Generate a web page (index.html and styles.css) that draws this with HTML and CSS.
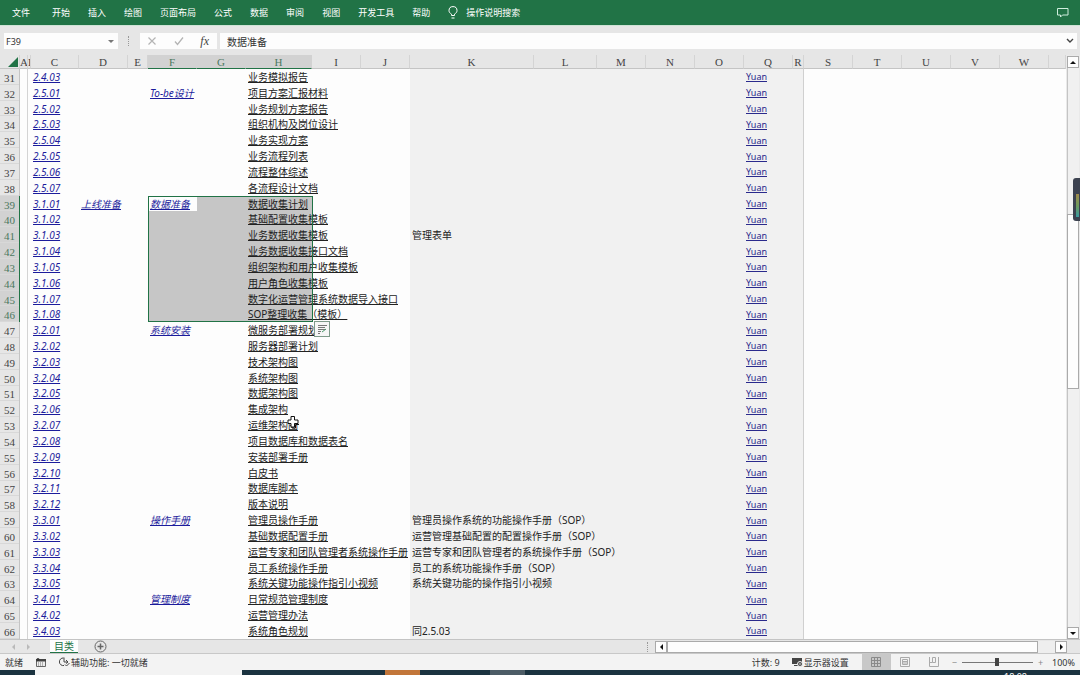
FILE: index.html
```html
<!DOCTYPE html>
<html lang="zh-CN">

<head>
    <meta charset="UTF-8">
    <meta name="viewport" content="width=device-width, initial-scale=1.0">
    <title>目类</title>
    <link rel="stylesheet" href="styles.css">
</head>

<body>
    <nav class="ribbon">
        <button class="file-tab">文件</button>
        <button>开始</button>
        <button>插入</button>
        <button>绘图</button>
        <button>页面布局</button>
        <button>公式</button>
        <button>数据</button>
        <button>审阅</button>
        <button>视图</button>
        <button>开发工具</button>
        <button>帮助</button>
        <button class="tell-me">
            <svg width="10" height="13" viewBox="0 0 10 13" fill="none" stroke="#fff">
                <path d="M3.5 9.5V8.2C2.2 7.2 1 6.3 1 4.6a4 4 0 0 1 8 0c0 1.700-1.200 2.600-2.500 3.600v1.300zM3.500 12h3" />
            </svg>
            操作说明搜索
        </button>
        <button class="comments" aria-label="批注">
            <svg width="12" height="10" viewBox="0 0 12 10" fill="none" stroke="#cfeedd">
                <path d="M.5.5h10.500v6.500H5.500l-2 2V7h-3z" />
            </svg>
        </button>
    </nav>

    <div class="formula-bar">
        <div class="name-box">
            <input type="text" value="F39" aria-label="名称框">
            <span class="caret"></span>
        </div>
        <span class="grip"></span>
        <div class="formula-tools">
            <button aria-label="取消">
                <svg width="10" height="10" viewBox="0 0 10 10" stroke="#b4b4b4" stroke-width="1.200">
                    <path d="M1.500 1.500l7 7M8.500 1.500l-7 7" />
                </svg>
            </button>
            <button aria-label="输入">
                <svg width="10" height="10" viewBox="0 0 10 10" fill="none" stroke="#b4b4b4" stroke-width="1.300">
                    <path d="M1 5.500l2.500 3L9 1.500" />
                </svg>
            </button>
            <button class="fx">fx</button>
        </div>
        <div class="formula-input">
            <input type="text" value="数据准备" aria-label="编辑栏">
            <svg width="8" height="6" viewBox="0 0 8 6" fill="none" stroke="#444" stroke-width="1.400">
                <path d="M1 1l3 3 3-3" />
            </svg>
        </div>
    </div>

    <main class="sheet">
        <div class="cells">
            <table>
                <colgroup>
                    <col class="w-row">
                    <col class="w-a">
                    <col class="w-b">
                    <col class="w-c">
                    <col class="w-std">
                    <col class="w-e">
                    <col class="w-std">
                    <col class="w-std">
                    <col class="w-h">
                    <col class="w-std">
                    <col class="w-std">
                    <col class="w-k shaded">
                    <col class="w-l shaded">
                    <col class="w-std shaded">
                    <col class="w-std shaded">
                    <col class="w-std shaded">
                    <col class="w-std shaded">
                    <col class="w-r shaded">
                    <col class="w-std">
                    <col class="w-std">
                    <col class="w-std">
                    <col class="w-std">
                    <col class="w-std">
                    <col>
                </colgroup>
                <thead>
                    <tr id="column-heads"></tr>
                </thead>
                <tbody id="rows"></tbody>
            </table>
            <svg class="pointer" width="12" height="14" viewBox="0 0 12 14" fill="#fff" stroke="#111">
                <path d="M4 1.500h3.500v3.500H11v3.500H7.500V12H4V8.500H1V5h3z" />
                <path d="M5 13h3.500V9.500H12" fill="none" />
            </svg>
        </div>
        <div class="vscroll">
            <button aria-label="向上"><span class="arrow up"></span></button>
            <div class="vtrack">
                <div class="vthumb"></div>
            </div>
            <button aria-label="向下"><span class="arrow down"></span></button>
            <div class="side-widget"><span></span></div>
        </div>
    </main>

    <div class="tab-bar">
        <span class="tab-nav"><i class="arrow left"></i><i class="arrow right"></i></span>
        <button class="sheet-tab">目类</button>
        <button class="add-sheet" aria-label="新工作表">
            <svg width="13" height="13" viewBox="0 0 13 13" fill="none" stroke="#666">
                <circle cx="6.500" cy="6.500" r="5.500" />
                <path d="M6.500 3.500v6M3.500 6.500h6" stroke-width="1.500" />
            </svg>
        </button>
        <span class="grip"></span>
        <div class="hscroll">
            <button aria-label="向左"><span class="arrow left"></span></button>
            <div class="hthumb"></div>
            <button aria-label="向右"><span class="arrow right"></span></button>
        </div>
    </div>

    <footer class="status-bar">
        <span class="ready">就绪</span>
        <svg class="macro" width="10" height="9" viewBox="0 0 10 9">
            <path d="M.5 2.500h9v6h-9z" fill="#eee" stroke="#666" />
            <path d="M0 1h10v2.500H0z" fill="#444" />
            <path d="M2 5h6M2 7h6" stroke="#777" stroke-dasharray="1 1" />
            <circle cx="2" cy="1.500" r="1.500" fill="#333" />
        </svg>
        <button class="access">
            <svg width="11" height="10" viewBox="0 0 11 10" fill="none" stroke="#444">
                <path d="M4.500 1A3.800 3.800 0 1 0 5 8.500M5 .5V5h3.500M7 3l2 2-2 1.500M6 7.500l1.500 1.500L10.500 6" />
            </svg>
            辅助功能: 一切就绪
        </button>
        <span class="count">计数: 9</span>
        <button class="display">
            <svg width="11" height="10" viewBox="0 0 11 10">
                <path d="M0 1h10v6H0zM2 8h4v1H2z" fill="#444" />
                <circle cx="8" cy="7" r="2.500" fill="#444" stroke="#f3f3f3" />
                <circle cx="8" cy="7" r=".8" fill="#f3f3f3" />
            </svg>
            显示器设置
        </button>
        <div class="views">
            <button class="active" aria-label="普通">
                <svg width="10" height="10" viewBox="0 0 10 10" fill="none" stroke="#8a8a8a">
                    <path d="M.5.5h9v9h-9zM3.500.5v9M6.500.5v9M.5 3.500h9M.5 6.500h9" />
                </svg>
            </button>
            <button aria-label="页面布局">
                <svg width="10" height="10" viewBox="0 0 10 10" fill="none" stroke="#aaa">
                    <path d="M.5.5h9v9h-9zM2.500 2.500h5v5h-5zM3 4.500h4M3 6h4" />
                </svg>
            </button>
            <button aria-label="分页预览">
                <svg width="10" height="10" viewBox="0 0 10 10" fill="none" stroke="#aaa">
                    <path d="M.5 0v9.500h9V0M3.500.5v5h3v-5M.5 5.500h3M3.500.5h3" />
                </svg>
            </button>
        </div>
        <div class="zoom">
            <button aria-label="缩小">−</button>
            <input type="range" min="0" max="100" value="50" aria-label="缩放">
            <button aria-label="放大">+</button>
            <span>100%</span>
        </div>
    </footer>

    <div class="taskbar">
        <span class="task-search"></span>
        <span class="task-app orange"></span>
        <span class="task-app gray"></span>
        <time>18:08</time>
    </div>

    <script>
        const COLUMNS = ['A', 'B', 'C', 'D', 'E', 'F', 'G', 'H', 'I', 'J', 'K', 'L', 'M', 'N', 'O', 'Q', 'R', 'S', 'T', 'U', 'V', 'W', ''];
        const FIRST_ROW = 31;

        // code, document, and the optional D, F and K columns
        const DATA = [
            { c: '2.4.03', h: '业务模拟报告' },
            { c: '2.5.01', h: '项目方案汇报材料', f: 'To-be设计' },
            { c: '2.5.02', h: '业务规划方案报告' },
            { c: '2.5.03', h: '组织机构及岗位设计' },
            { c: '2.5.04', h: '业务实现方案' },
            { c: '2.5.05', h: '业务流程列表' },
            { c: '2.5.06', h: '流程整体综述' },
            { c: '2.5.07', h: '各流程设计文档' },
            { c: '3.1.01', h: '数据收集计划', d: '上线准备', f: '数据准备' },
            { c: '3.1.02', h: '基础配置收集模板' },
            { c: '3.1.03', h: '业务数据收集模板', k: '管理表单' },
            { c: '3.1.04', h: '业务数据收集接口文档' },
            { c: '3.1.05', h: '组织架构和用户收集模板' },
            { c: '3.1.06', h: '用户角色收集模板' },
            { c: '3.1.07', h: '数字化运营管理系统数据导入接口' },
            { c: '3.1.08', h: 'SOP整理收集（模板）' },
            { c: '3.2.01', h: '微服务部署规划', f: '系统安装' },
            { c: '3.2.02', h: '服务器部署计划' },
            { c: '3.2.03', h: '技术架构图' },
            { c: '3.2.04', h: '系统架构图' },
            { c: '3.2.05', h: '数据架构图' },
            { c: '3.2.06', h: '集成架构' },
            { c: '3.2.07', h: '运维架构图' },
            { c: '3.2.08', h: '项目数据库和数据表名' },
            { c: '3.2.09', h: '安装部署手册' },
            { c: '3.2.10', h: '白皮书' },
            { c: '3.2.11', h: '数据库脚本' },
            { c: '3.2.12', h: '版本说明' },
            { c: '3.3.01', h: '管理员操作手册', f: '操作手册', k: '管理员操作系统的功能操作手册（SOP）' },
            { c: '3.3.02', h: '基础数据配置手册', k: '运营管理基础配置的配置操作手册（SOP）' },
            { c: '3.3.03', h: '运营专家和团队管理者系统操作手册', k: '运营专家和团队管理者的系统操作手册（SOP）' },
            { c: '3.3.04', h: '员工系统操作手册', k: '员工的系统功能操作手册（SOP）' },
            { c: '3.3.05', h: '系统关键功能操作指引小视频', k: '系统关键功能的操作指引小视频' },
            { c: '3.4.01', h: '日常规范管理制度', f: '管理制度' },
            { c: '3.4.02', h: '运营管理办法' },
            { c: '3.4.03', h: '系统角色规划', k: '同2.5.03' },
        ];

        const SELECTION = { columns: ['F', 'G', 'H'], from: 39, to: 46 };

        const SELECTION_FRAME = `
            <div class="selection">
                <button class="quick-analysis" aria-label="快速分析">
                    <svg width="11" height="11" viewBox="0 0 11 11" fill="none" stroke="#777">
                        <path d="M1 1.500h9M1 3.500h7M1 5.500h8M1 7.500h3M1 9.500h2" />
                        <path d="M5 8l4-3" stroke="#4a9a6c" />
                    </svg>
                </button>
            </div>`;

        function link(text, className) {
            return text ? `<a href="#" class="${className}">${text}</a>` : '';
        }

        function cellContent(column, row) {
            switch (column) {
                case 'C': return link(row.c, 'blue');
                case 'D': return link(row.d, 'blue');
                case 'F': return link(row.f, 'blue');
                case 'H': return link(row.h, 'doc');
                case 'K': return row.k || '';
                case 'Q': return link('Yuan', 'owner');
                default: return '';
            }
        }

        function renderRow(row, index) {
            const number = FIRST_ROW + index;
            const inRange = number >= SELECTION.from && number <= SELECTION.to;
            const cells = COLUMNS.map((column) => {
                const classes = ['col-' + column.toLowerCase()];
                let content = cellContent(column, row);
                if (inRange && SELECTION.columns.includes(column)) {
                    classes.push('selected');
                }
                if (number === SELECTION.from && column === 'F') {
                    classes.push('current');
                    content += SELECTION_FRAME;
                }
                return `<td class="${classes.join(' ')}">${content}</td>`;
            });
            return `<tr><th scope="row" class="${inRange ? 'picked' : ''}">${number}</th>${cells.join('')}</tr>`;
        }

        document.getElementById('column-heads').innerHTML =
            '<th class="corner"><span></span></th>' +
            COLUMNS.map((c) => `<th scope="col" class="${SELECTION.columns.includes(c) ? 'picked' : ''}">${c}</th>`).join('');
        document.getElementById('rows').innerHTML = DATA.map(renderRow).join('');
    </script>
</body>

</html>
```

FILE: styles.css
```css
* {
    box-sizing: border-box;
}

body {
    margin: 0;
    height: 100vh;
    display: flex;
    flex-direction: column;
    overflow: hidden;
    font-family: "Noto Sans", "Noto Sans CJK SC", sans-serif;
    font-size: 9px;
    color: #333;
    background: #e6e6e6;
}

button,
input {
    font: inherit;
    color: inherit;
    background: none;
    border: none;
    padding: 0;
    margin: 0;
    outline: none;
}

svg {
    display: block;
    flex: none;
}

/* ribbon */
.ribbon {
    height: 25px;
    flex: none;
    display: flex;
    align-items: center;
    gap: 18px;
    padding: 0 11px 0 12px;
    background: #217346;
    color: #fff;
}

.ribbon .file-tab {
    margin-right: 4px;
}

.tell-me {
    display: flex;
    align-items: center;
    gap: 8px;
}

.ribbon .comments {
    margin-left: auto;
}

/* formula bar */
.formula-bar {
    height: 30px;
    flex: none;
    display: flex;
    align-items: flex-start;
    padding: 7px 3px 0 4px;
    border-top: 1px solid #cfe3d6;
}

.name-box,
.formula-tools,
.formula-input {
    height: 16px;
    display: flex;
    align-items: center;
    background: #fdfdfd;
}

.name-box {
    width: 114px;
    padding: 0 4px 0 2px;
}

.name-box input {
    flex: 1;
    min-width: 0;
}

.caret {
    border: 3px solid transparent;
    border-top-color: #777;
    border-bottom: none;
}

.grip {
    width: 1px;
    height: 10px;
    border-left: 1px dotted #999;
}

.formula-bar .grip {
    margin: 3px 11px 0 10px;
}

.formula-tools {
    width: 77px;
    padding: 0 8px 0 7px;
    justify-content: space-between;
}

.fx {
    font: italic 12px "Liberation Serif", serif;
    color: #444;
}

.formula-input {
    flex: 1;
    margin-left: 3px;
    padding: 0 3px 0 7px;
    font-size: 10px;
}

.formula-input input {
    flex: 1;
}

/* sheet */
.sheet {
    flex: 1;
    min-height: 0;
    display: flex;
}

.cells {
    flex: 1;
    min-width: 0;
    position: relative;
    overflow: hidden;
    background: #fdfdfd;
}

table {
    width: 100%;
    height: 100%;
    table-layout: fixed;
    border-collapse: separate;
    border-spacing: 0;
}

.w-row {
    width: 20px;
}

.w-a {
    width: 8px;
}

.w-b {
    width: 3px;
}

.w-c {
    width: 48px;
}

.w-std {
    width: 49px;
}

.w-e {
    width: 20px;
}

.w-h {
    width: 66px;
}

.w-k {
    width: 124px;
}

.w-l {
    width: 63px;
}

.w-r {
    width: 11px;
}

.shaded {
    background: #f1f1f1;
}

th,
td {
    padding: 0;
    white-space: nowrap;
    line-height: 12px;
}

th {
    font-family: "Liberation Serif", serif;
    font-size: 11px;
    font-weight: normal;
    text-align: center;
    background: #e6e6e6;
    color: #444;
}

thead th {
    height: 14px;
    padding-top: 1px;
    overflow: hidden;
    border-right: 1px solid #d4d4d4;
    border-bottom: 1px solid #c4c4c4;
}

thead .picked {
    background: #d2d2d2;
    border-right-color: #d2d2d2;
    border-bottom-color: #217346;
    color: #4c7860;
}

.corner span {
    display: block;
    width: 0;
    margin-left: 8px;
    border-left: 10px solid transparent;
    border-bottom: 10px solid #217346;
}

tbody th {
    padding-top: 2px;
    border-right: 1px solid #c4c4c4;
    box-shadow: inset 0 -1px #d8d8d8;
}

tbody .picked {
    background: #d2d2d2;
    border-right-color: #217346;
    color: #4c7860;
}

td {
    font-size: 10px;
    color: #222;
    vertical-align: middle;
}

.col-a {
    border-right: 1px solid #d4d4d4;
}

.col-r {
    border-right: 1px solid #d0d0d0;
}

.col-c,
.col-d,
.col-f,
.col-h,
.col-k,
.col-q {
    padding-left: 2px;
}

.selected {
    background: #c6c6c6;
}

.current {
    position: relative;
    background: #fdfdfd;
}

/* frame spans F39:H46 */
.selection {
    position: absolute;
    top: 0;
    left: 0;
    width: 165px;
    height: 800%;
    border: 1px solid #217346;
}

.quick-analysis {
    position: absolute;
    left: 165px;
    top: 100%;
    width: 16px;
    height: 16px;
    display: grid;
    place-items: center;
    background: #f6f6f6;
    border: 1px solid #7f9a8a;
}

.blue {
    font-style: italic;
    color: #1c1c9c;
}

.doc {
    color: #222;
}

.owner {
    font-size: 9px;
    color: #2a2a8c;
}

.pointer {
    position: absolute;
    left: 287px;
    top: 360px;
}

/* scroll bars */
.vscroll {
    width: 14px;
    display: flex;
    flex-direction: column;
    position: relative;
    padding: 1px 1px 0;
    background: #e9e9e9;
}

.vscroll button,
.hscroll button {
    flex: none;
    width: 12px;
    height: 12px;
    display: grid;
    place-items: center;
    background: #fdfdfd;
    border: 1px solid #aaa;
}

.vtrack {
    flex: 1;
    background: #f0f0f0;
    border-left: 1px solid #c4c4c4;
}

.vthumb {
    margin-top: 146px;
    margin-left: -1px;
    height: 175px;
    background: #fdfdfd;
    border: 1px solid #aaa;
}

.arrow {
    border: 3px solid transparent;
}

.arrow.up {
    border-top: none;
    border-bottom-color: #111;
}

.arrow.down {
    border-bottom: none;
    border-top-color: #111;
}

.arrow.left {
    border-left: none;
    border-right-color: #111;
}

.arrow.right {
    border-right: none;
    border-left-color: #111;
}

.side-widget {
    position: absolute;
    right: 0;
    top: 123px;
    width: 7px;
    height: 43px;
    padding: 16px 1px 4px 3px;
    background: #3c4250;
    border-radius: 3px 0 0 3px;
}

.side-widget span {
    display: block;
    height: 100%;
    background: linear-gradient(#a08a4c, #6f9a5c, #3a9aa0);
}

/* sheet tabs */
.tab-bar {
    height: 15px;
    flex: none;
    display: flex;
    align-items: center;
    border-top: 1px solid #c4c4c4;
    border-bottom: 1px solid #c8c8c8;
}

.tab-nav {
    width: 50px;
    display: flex;
    gap: 12px;
    padding-left: 12px;
    opacity: 0.2;
}

.sheet-tab {
    width: 28px;
    height: 13px;
    line-height: 11px;
    font-size: 10px;
    color: #217346;
    background: #fdfdfd;
    border-bottom: 1px solid #217346;
}

.add-sheet {
    margin-left: 16px;
}

.tab-bar .grip {
    margin-left: auto;
    margin-right: 7px;
}

.hscroll {
    width: 412px;
    margin-right: 13px;
    display: flex;
    background: #eee;
}

.hthumb {
    flex: 1;
    margin-right: 17px;
    background: #fdfdfd;
    border: 1px solid #aaa;
}

/* status bar */
.status-bar {
    height: 16px;
    flex: none;
    display: flex;
    align-items: center;
    padding: 0 5px;
    background: #f3f3f3;
}

.macro {
    margin-left: 13px;
}

.access,
.display {
    display: flex;
    align-items: center;
    gap: 1px;
}

.access {
    margin-left: 13px;
}

.count {
    margin-left: auto;
}

.display {
    margin-left: 12px;
}

.views {
    display: flex;
    margin-left: 13px;
    align-self: stretch;
}

.views button {
    width: 29px;
    display: grid;
    place-items: center;
}

.views .active {
    background: #c8c8c8;
}

.zoom {
    display: flex;
    align-items: center;
    gap: 5px;
    margin-left: 3px;
}

.zoom button {
    color: #888;
}

.zoom span {
    margin-left: 4px;
}

.zoom input {
    appearance: none;
    width: 71px;
    height: 9px;
    background: linear-gradient(#777, #777) center / 100% 1px no-repeat;
}

.zoom input::-webkit-slider-thumb {
    appearance: none;
    width: 4px;
    height: 8px;
    background: #444;
}

/* taskbar */
.taskbar {
    height: 5px;
    flex: none;
    display: flex;
    overflow: hidden;
    background: #1b3340;
}

.task-search {
    width: 207px;
    margin-left: 35px;
    background: #f3f3f3;
}

.task-app {
    width: 35px;
}

.orange {
    margin-left: 143px;
    background: #c2763a;
}

.gray {
    margin-left: 70px;
    background: #4c5c66;
}

.taskbar time {
    margin-left: auto;
    margin-right: 53px;
    line-height: 13px;
    color: #fff;
}
```
